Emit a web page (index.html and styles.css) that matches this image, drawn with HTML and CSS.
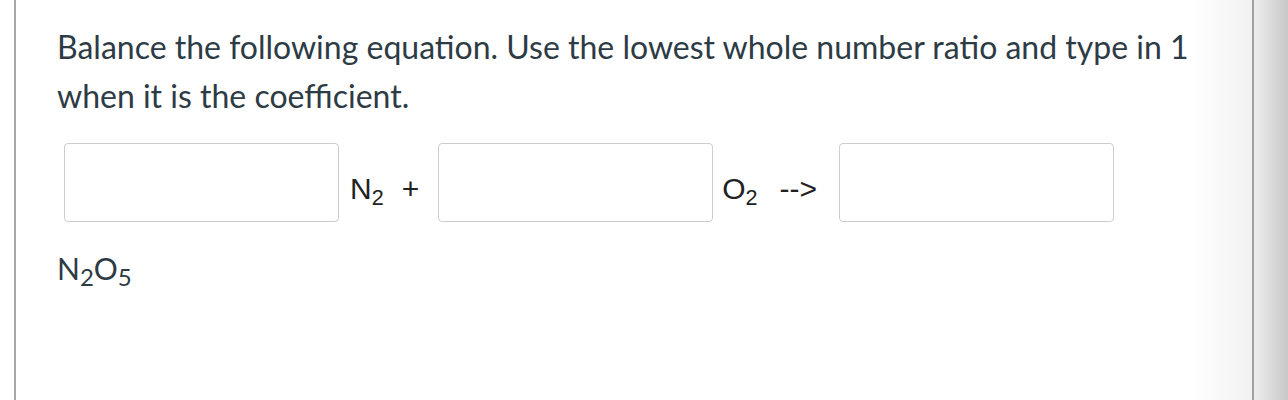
FILE: index.html
```html
<!DOCTYPE html>
<html>
<head>
<meta charset="utf-8">
<link rel="stylesheet" href="styles.css">
</head>
<body>
<div class="page">
  <div class="panel">
    <p class="prompt">Balance the following equation. Use the lowest whole number ratio and type in 1 when it is the coefficient.</p>
    <div class="equation">
      <input class="blank b1" type="text">
      <span class="formula f1"><span class="sym">N<sub>2</sub></span><span class="op">+</span></span>
      <input class="blank b2" type="text">
      <span class="formula f2"><span class="sym">O<sub>2</sub></span><span class="op">--&gt;</span></span>
      <input class="blank b3" type="text">
    </div>
    <div class="product">N<sub>2</sub>O<sub>5</sub></div>
  </div>
  <div class="edge"></div>
</div>
</body>
</html>
```

FILE: styles.css
```css
html, body {
  margin: 0;
  padding: 0;
  background: #ffffff;
}
.page {
  display: flex;
  width: 1288px;
  height: 400px;
  overflow: hidden;
}
.panel {
  flex: none;
  margin-left: 14px;
  width: 1240px;
  box-sizing: border-box;
  border-left: 2px solid #a8a8a8;
  border-right: 2px solid #a0a0a0;
  background: linear-gradient(to right, #ffffff 0px, #ffffff 1175px, #f1f1f1 1236px);
  padding: 22px 0 0 41px;
  font-family: Lato, "Noto Sans", sans-serif;
  color: #2d3b45;
}
.prompt {
  margin: 0;
  width: 1150px;
  font-size: 32px;
  line-height: 49px;
}
.equation {
  display: flex;
  align-items: flex-start;
  margin-top: 23px;
  height: 79px;
}
.blank {
  box-sizing: border-box;
  width: 275px;
  height: 79px;
  margin: 0;
  border: 1px solid #c9cdd0;
  border-radius: 4px;
  background: #fff;
}
.b1 { margin-left: 7px; }
.b2 { margin-left: 19px; }
.b3 { margin-left: 22px; }
.formula {
  display: flex;
  align-items: baseline;
  font-family: "Liberation Sans", Arial, sans-serif;
  font-size: 30px;
  color: #222;
  line-height: 34px;
  margin-top: 29px;
}
.f1 { margin-left: 11px; }
.f2 { margin-left: 9px; }
.op { margin-left: 18px; }
.f2 .op { margin-left: 22px; }
.formula sub {
  font-size: 0.72em;
  line-height: 0;
  vertical-align: -0.27em;
}
.product {
  margin-top: 26px;
  font-size: 30px;
  line-height: 40px;
  color: #2d3b45;
}
.product sub {
  font-size: 0.8em;
  line-height: 0;
  vertical-align: -0.25em;
}
.edge {
  flex: 1;
  background: linear-gradient(to right, #ededed, #c8c8c8);
}
```
